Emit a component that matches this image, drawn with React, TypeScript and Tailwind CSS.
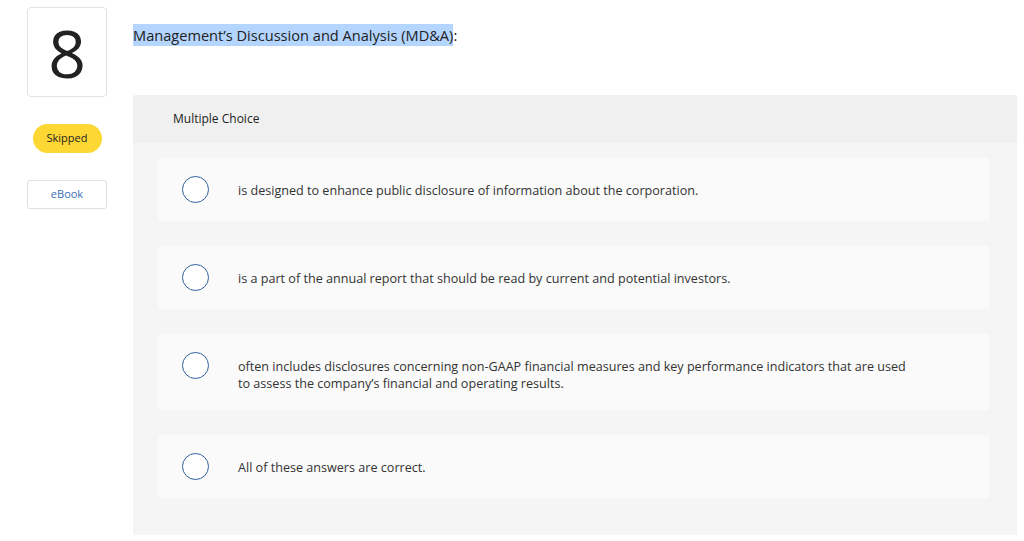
const options = [
  'is designed to enhance public disclosure of information about the corporation.',
  'is a part of the annual report that should be read by current and potential investors.',
  'often includes disclosures concerning non-GAAP financial measures and key performance indicators that are used to assess the company’s financial and operating results.',
  'All of these answers are correct.',
];

function Radio() {
  return <span className="block w-[27px] h-[27px] shrink-0 rounded-full border-[1.5px] border-[#2f5f98] bg-white" />;
}

export default function App() {
  return (
    <div className="w-[1024px] h-[541px] bg-white flex overflow-hidden text-[#333]" style={{ fontFamily: '"Open Sans", Lato, sans-serif' }}>
      {/* Sidebar */}
      <div className="w-[133px] shrink-0 flex flex-col items-start pl-[27px] pt-[7px]">
        <div className="w-[80px] h-[90px] rounded-[4px] border border-[#e3e3e3] flex items-center justify-center text-[66px] leading-none text-[#222]">
          8
        </div>
        <div className="w-[80px] flex justify-center mt-[27px]">
          <span className="w-[69px] h-[29px] rounded-full bg-[#fdd835] flex items-center justify-center text-[11px] text-[#222]">
            Skipped
          </span>
        </div>
        <button className="mt-[27px] w-[80px] h-[29px] rounded-[3px] border border-[#e0e0e0] bg-white text-[11px] text-[#3a72b8]">
          eBook
        </button>
      </div>

      {/* Main */}
      <div className="flex-1 flex flex-col pt-[25px] pr-[7px]">
        <div className="text-[14.6px] leading-[20px] text-[#222]">
          <span className="bg-[#b4d5fe] py-[1px]">Management’s Discussion and Analysis (MD&amp;A)</span>:
        </div>

        <div className="mt-[50px] h-[440px] rounded-t-[3px] bg-[#f5f5f5] flex flex-col">
          <div className="h-[48px] shrink-0 bg-[#f0f0f0] rounded-t-[3px] flex items-center pl-[40px] text-[12px] text-[#222]">
            Multiple Choice
          </div>
          <div className="flex flex-col gap-[25px] pt-[15px] pl-[25px] pr-[27px]">
            {options.map((o) => (
              <label key={o} className="flex items-start bg-[#fafafa] rounded-[4px] py-[18px] pl-[24px] pr-[75px]">
                <Radio />
                <span className="ml-[29px] pt-[6px] text-[12.6px] leading-[17px] text-[#333]">{o}</span>
              </label>
            ))}
          </div>
        </div>
      </div>
    </div>
  );
}
